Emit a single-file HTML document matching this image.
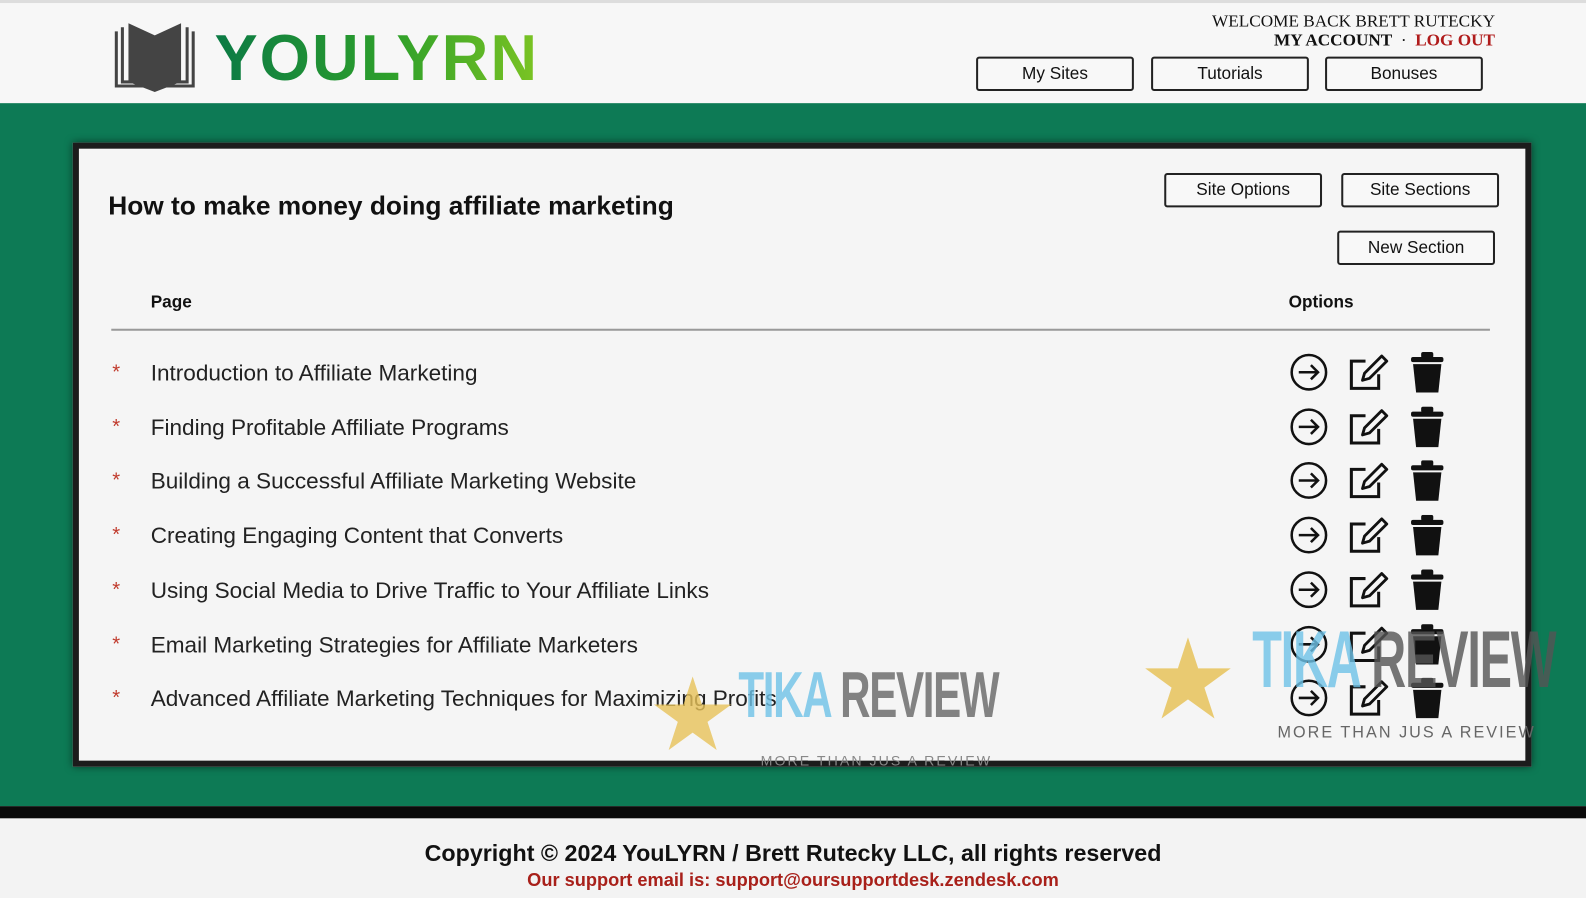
<!DOCTYPE html>
<html><head><style>
*{margin:0;padding:0;box-sizing:border-box}
body{width:1586px;height:898px;overflow:hidden;background:#f3f3f3;font-family:"Liberation Sans",Arial,sans-serif;position:relative}
#w{position:absolute;left:0;top:0;width:1568px;height:888px;transform:scale(1.0115);transform-origin:0 0}
.hdr{position:absolute;left:0;top:0;width:1568px;height:102px;background:#f7f7f7;border-top:3px solid #ddd}
.green{position:absolute;left:0;top:102px;width:1568px;height:695px;background:#0d7a55}
.black{position:absolute;left:0;top:797px;width:1568px;height:12px;background:#0a0a0a}
.card{position:absolute;left:72px;top:141px;width:1442px;height:617px;background:#f5f5f5;border:6px solid #1c1c1c;box-shadow:0 0 8px rgba(0,0,0,.6)}
.btn{position:absolute;height:34px;border:2px solid #222;border-radius:3px;background:#f8f8f8;font-size:17px;color:#111;text-align:center;line-height:30px}
.abs{position:absolute;white-space:nowrap}
.row{position:absolute;left:149px;font-size:22.3px;color:#222}
.star{position:absolute;left:111px;color:#c0392b;font-size:20px}
.ic{position:absolute}
</style></head><body><div id="w">
<div class="hdr">
<svg class="abs" style="left:113px;top:18px" width="80" height="72" viewBox="0 0 80 72">
<path d="M2 10v54h30M8 6v54h26M78 10v54H48M72 6v54H46" fill="none" stroke="#444" stroke-width="3"/>
<path d="M14 2l26 12v56L14 60z M66 2L40 14v56l26-10z" fill="#444"/>
</svg>
<div class="abs" style="left:212px;top:16px;font-size:64px;font-weight:bold;letter-spacing:2px;background:linear-gradient(90deg,#0b7a45,#2ea02a 55%,#7cc423);-webkit-background-clip:text;color:transparent;line-height:76px">YOULYRN</div>
<div class="abs" style="left:1150px;top:8px;width:328px;text-align:right;font-family:'Liberation Serif',serif;font-size:17px;color:#111;line-height:19px">WELCOME BACK BRETT RUTECKY<br><b>MY ACCOUNT</b> &nbsp;· &nbsp;<b style="color:#b01c1c">LOG OUT</b></div>
<div class="btn" style="left:965px;top:53px;width:156px">My Sites</div>
<div class="btn" style="left:1138px;top:53px;width:156px">Tutorials</div>
<div class="btn" style="left:1310px;top:53px;width:156px">Bonuses</div>
</div>
<div class="green"></div>
<div class="black"></div>
<div class="card"></div>
<div class="abs" style="left:107px;top:188px;font-size:26px;font-weight:bold;color:#111">How to make money doing affiliate marketing</div>
<div class="btn" style="left:1151px;top:171px;width:156px">Site Options</div>
<div class="btn" style="left:1326px;top:171px;width:156px">Site Sections</div>
<div class="btn" style="left:1322px;top:228px;width:156px">New Section</div>
<div class="abs" style="left:149px;top:289px;font-size:17px;font-weight:bold;color:#111">Page</div>
<div class="abs" style="left:1274px;top:289px;font-size:17px;font-weight:bold;color:#111">Options</div>
<div class="abs" style="left:110px;top:325px;width:1363px;height:2px;background:#999"></div>
<div id="rows"></div>
<div class="abs" style="left:640px;top:648px;font-size:100px;color:#e8c35a;opacity:.8">★</div>
<div class="abs" style="left:730px;top:650px;font-size:64px;font-weight:bold;letter-spacing:-2px;transform:scaleX(.65);transform-origin:left;opacity:.8"><span style="color:#6fc3e8">TIKA</span> <span style="color:#666">REVIEW</span></div>
<div class="abs" style="left:752px;top:744px;font-size:14px;color:#888;letter-spacing:2px">MORE THAN JUS A REVIEW</div>
<div class="abs" style="left:1125px;top:608px;font-size:110px;color:#e8c35a;opacity:.85">★</div>
<div class="abs" style="left:1238px;top:606px;font-size:80px;font-weight:bold;letter-spacing:-2px;transform:scaleX(.6);transform-origin:left;opacity:.8"><span style="color:#6fc3e8">TIKA</span> <span style="color:#555">REVIEW</span></div>
<div class="abs" style="left:1263px;top:716px;font-size:16px;color:#666;letter-spacing:2px">MORE THAN JUS A REVIEW</div>
<div class="abs" style="left:0;top:830px;width:1568px;text-align:center;font-size:23px;font-weight:bold;color:#111">Copyright © 2024 YouLYRN / Brett Rutecky LLC, all rights reserved</div>
<div class="abs" style="left:0;top:860px;width:1568px;text-align:center;font-size:18px;font-weight:bold;color:#a8201a">Our support email is: support@oursupportdesk.zendesk.com</div>
</div>
<script>
var t=["Introduction to Affiliate Marketing","Finding Profitable Affiliate Programs","Building a Successful Affiliate Marketing Website","Creating Engaging Content that Converts","Using Social Media to Drive Traffic to Your Affiliate Links","Email Marketing Strategies for Affiliate Marketers","Advanced Affiliate Marketing Techniques for Maximizing Profits"];
var h="";
t.forEach(function(s,i){var y=369+i*53.7;
h+='<div class="star" style="top:'+(y-12)+'px">*</div><div class="row" style="top:'+(y-13)+'px">'+s+'</div>';
h+='<svg class="ic" style="left:1274px;top:'+(y-21)+'px" width="160" height="42" viewBox="0 0 160 42">'+
'<circle cx="20" cy="20" r="17" fill="none" stroke="#111" stroke-width="2.5"/><path d="M10 20h19M22 13l7 7-7 7" fill="none" stroke="#111" stroke-width="2.5"/>'+
'<path d="M76 9H62v27h27V22" fill="none" stroke="#111" stroke-width="3"/><path d="M92 4l5 5-17 17-7 2 2-7z" fill="none" stroke="#111" stroke-width="2.8" stroke-linejoin="round"/>'+
'<rect x="121" y="5" width="32" height="5" rx="2" fill="#111"/><rect x="131" y="0" width="12" height="6" rx="2" fill="#111"/><path d="M123 12h28l-3 28h-22z" fill="#111"/></svg>';});
document.getElementById("rows").innerHTML=h;
</script>
</body></html>
